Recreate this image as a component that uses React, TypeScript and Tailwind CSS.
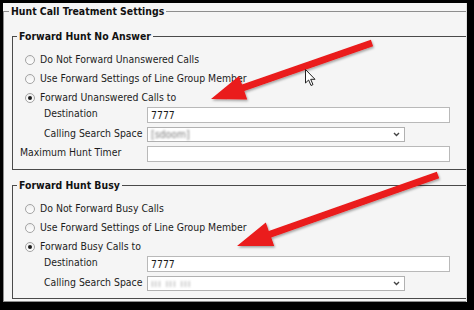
import React from "react";

type P = [number, number];

function arrowPoints(tail: P, tip: P, headLen: number, headHalf: number, bodyHalf: number): string {
  const dx = tip[0] - tail[0];
  const dy = tip[1] - tail[1];
  const len = Math.hypot(dx, dy);
  const ux = dx / len;
  const uy = dy / len;
  const nx = -uy;
  const ny = ux;
  const bx = tip[0] - ux * headLen;
  const by = tip[1] - uy * headLen;
  const pts: P[] = [
    [tail[0] + nx * bodyHalf, tail[1] + ny * bodyHalf],
    [bx + nx * bodyHalf, by + ny * bodyHalf],
    [bx + nx * headHalf, by + ny * headHalf],
    tip,
    [bx - nx * headHalf, by - ny * headHalf],
    [bx - nx * bodyHalf, by - ny * bodyHalf],
    [tail[0] - nx * bodyHalf, tail[1] - ny * bodyHalf],
  ];
  return pts.map((p) => `${p[0].toFixed(1)},${p[1].toFixed(1)}`).join(" ");
}

function Radio({ checked, label }: { checked?: boolean; label: string }) {
  return (
    <div className="flex items-center h-[19px] pl-[12px] gap-[5px]">
      <span className="flex items-center justify-center w-[10px] h-[10px] rounded-full border border-[#a3a3a3] bg-gradient-to-b from-[#eeeeee] to-white">
        {checked && <span className="w-[4px] h-[4px] rounded-full bg-[#1e1e1e]" />}
      </span>
      <span className="whitespace-nowrap">{label}</span>
    </div>
  );
}

function TextRow({ label, value, indent, className }: { label: string; value?: string; indent: "deep" | "shallow"; className?: string }) {
  return (
    <div className={"flex items-start " + (className ?? "")}>
      <div className={indent === "deep" ? "w-[134px] pl-[31px] leading-[13px] whitespace-nowrap" : "w-[134px] pl-[7px] leading-[13px] whitespace-nowrap"}>
        {label}
      </div>
      <div className="w-[303px] h-[16px] border border-[#b9b9b9] bg-white pl-[3px] leading-[14px]">{value}</div>
    </div>
  );
}

function SelectRow({ children, className }: { children: React.ReactNode; className?: string }) {
  return (
    <div className={"flex items-start " + (className ?? "")}>
      <div className="w-[134px] pl-[31px] leading-[13px] whitespace-nowrap">Calling Search Space</div>
      <div className="w-[258px] h-[15px] border border-[#b1b1b1] bg-white pl-[3px] flex items-center justify-between pr-[4px]">
        {children}
        <svg width="7" height="5" viewBox="0 0 7 5">
          <path d="M1 1 L3.5 3.5 L6 1" fill="none" stroke="#444" strokeWidth="1.4" />
        </svg>
      </div>
    </div>
  );
}

export default function App() {
  const a1 = arrowPoints([372, 43], [211, 99], 34, 12.5, 3.5);
  const a2 = arrowPoints([438, 175], [237, 246], 35, 12.5, 3.5);
  return (
    <div className="relative w-[474px] h-[310px] bg-black overflow-hidden pt-[3px] pl-[3px] [font-family:'DejaVu_Sans_Condensed','DejaVu_Sans',sans-serif] text-[10.4px] text-[#1c1c1c]">
      <div className="w-[464px] h-[299px] bg-[#f5f5f5] overflow-hidden border-r border-[#dedede] pt-[1px]">
        <fieldset className="w-[540px] border border-[#8e8e8e] pb-[2px]">
          <legend className="ml-[5px] px-[2px] font-bold leading-[14px] text-[#111]">Hunt Call Treatment Settings</legend>

          <fieldset className="ml-[8px] mt-[11px] w-[520px] border border-[#4a4a4a] pt-[7px] pb-[7px]">
            <legend className="ml-[4px] px-[2px] font-bold leading-[14px] text-[#111]">Forward Hunt No Answer</legend>
            <Radio label="Do Not Forward Unanswered Calls" />
            <Radio label="Use Forward Settings of Line Group Member" />
            <Radio checked label="Forward Unanswered Calls to" />
            <TextRow indent="deep" label="Destination" value="7777" />
            <SelectRow className="mt-[4px]">
              <span className="blur-[1px] text-[#7a7a7a] leading-[13px]">[sdoom]</span>
            </SelectRow>
            <TextRow indent="shallow" label="Maximum Hunt Timer" className="mt-[4px]" />
          </fieldset>

          <fieldset className="ml-[8px] mt-[8px] w-[520px] border border-[#4a4a4a] pt-[7px] pb-[7px]">
            <legend className="ml-[4px] px-[2px] font-bold leading-[14px] text-[#111]">Forward Hunt Busy</legend>
            <Radio label="Do Not Forward Busy Calls" />
            <Radio label="Use Forward Settings of Line Group Member" />
            <Radio checked label="Forward Busy Calls to" />
            <TextRow indent="deep" label="Destination" value="7777" />
            <SelectRow className="mt-[4px]">
              <span className="blur-[1.2px] text-[#a0a0a0] leading-[13px] tracking-[1px]">ııı ııı ııı</span>
            </SelectRow>
          </fieldset>
        </fieldset>
      </div>

      <svg className="absolute inset-0 pointer-events-none" width="474" height="310" viewBox="0 0 474 310">
        <defs>
          <filter id="sh" x="-10%" y="-10%" width="120%" height="130%">
            <feDropShadow dx="1" dy="1.5" stdDeviation="1" floodColor="#000" floodOpacity="0.35" />
          </filter>
        </defs>
        <polygon points={a1} fill="#ea1a1a" filter="url(#sh)" />
        <polygon points={a2} fill="#ea1a1a" filter="url(#sh)" />
        <path
          d="M305.5 69.5 L305.5 83 L308.6 80 L311 85.5 L313 84.6 L310.7 79.3 L315 79.3 Z"
          fill="#fff"
          stroke="#222"
          strokeWidth="1"
          strokeLinejoin="miter"
        />
      </svg>
    </div>
  );
}
